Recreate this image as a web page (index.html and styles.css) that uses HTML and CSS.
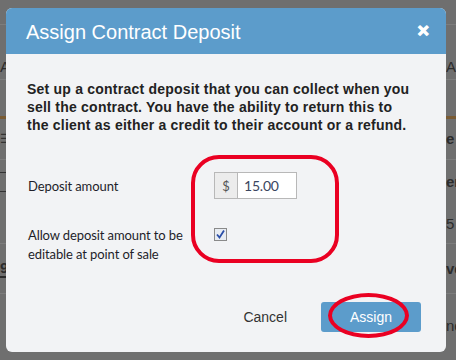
FILE: index.html
```html
<!DOCTYPE html>
<html>
<head>
<meta charset="utf-8">
<link rel="stylesheet" href="styles.css">
</head>
<body>
<div class="page">
  <div class="row r1"><span></span><span></span></div>
  <div class="row r2"><span class="frag">A</span><span class="frag right">AC</span></div>
  <div class="row r3"><span></span><span></span></div>
  <div class="bar"></div>
  <div class="row r4"><span class="frag icon">&#9776;</span><span class="frag right bold">e</span></div>
  <div class="row r5"><span class="frag box"></span><span class="frag right bold">em</span></div>
  <div class="row r6"><span></span><span class="frag right">5</span></div>
  <div class="row r7"><span class="frag bold under">9</span><span class="frag right bold">ve</span></div>
  <div class="row r9"><span></span><span class="frag right">ne</span></div>
</div>

<div class="modal">
  <div class="modal-header">
    <h1 class="title">Assign Contract Deposit</h1>
    <span class="close">&#x2715;</span>
  </div>
  <div class="modal-body">
    <p class="intro">Set up a contract deposit that you can collect when you sell the contract. You have the ability to return this to the client as either a credit to their account or a refund.</p>
    <div class="form">
      <div class="form-row">
        <label class="label">Deposit amount</label>
        <div class="input-group">
          <span class="addon">$</span>
          <span class="input">15.00</span>
        </div>
      </div>
      <div class="form-row">
        <label class="label">Allow deposit amount to be editable at point of sale</label>
        <span class="checkbox">
          <svg width="11" height="11" viewBox="0 0 11 11"><path d="M2 5.5 L4.5 8.5 L9 1.5" fill="none" stroke="#2a4ea8" stroke-width="1.8"/></svg>
        </span>
      </div>
      <div class="mark-rect"></div>
    </div>
  </div>
  <div class="modal-footer">
    <span class="btn-cancel">Cancel</span>
    <span class="btn-assign">Assign<span class="mark-ellipse"></span></span>
  </div>
</div>
</body>
</html>
```
FILE: styles.css
```css
* { box-sizing: border-box; }
html, body { margin: 0; padding: 0; }
body {
  width: 456px;
  height: 360px;
  background: #6f6f6f;
  overflow: hidden;
  position: relative;
  font-family: "Liberation Sans", Arial, sans-serif;
}

/* backdrop page */
.page { width: 456px; }
.row {
  display: flex;
  justify-content: space-between;
  align-items: center;
  border-bottom: 1px solid #7d7d7d;
}
.r1 { height: 25px; }
.r2 { height: 55px; align-items: flex-end; padding-bottom: 4px; }
.r3 { height: 36px; border-bottom: none; }
.bar { height: 3px; background: #7a5c34; }
.r4 { height: 41px; }
.r5 { height: 44px; border-bottom: none; }
.r6 { height: 40px; }
.r7 { height: 50px; }
.r9 { height: 64px; border-bottom: none; }
.frag { font-size: 15px; color: #2c2c2c; line-height: 16px; }
.frag.right { width: 10px; overflow: hidden; white-space: nowrap; }
.frag.bold { font-weight: bold; }
.frag.under { border-bottom: 2px solid #2c2c2c; }
.frag.icon { font-size: 12px; color: #333; }
.frag.box { width: 8px; height: 20px; border: 1px solid #333; border-left: none; }

/* modal */
.modal {
  position: absolute;
  left: 6px;
  top: 8px;
  width: 440px;
  height: 344px;
  background: #f2f3f5;
  border-radius: 6px;
  overflow: hidden;
  display: flex;
  flex-direction: column;
}
.modal-header {
  height: 46px;
  flex: none;
  background: #5c9ccb;
  display: flex;
  align-items: center;
  justify-content: space-between;
  padding: 0 16px 0 20px;
}
.title {
  margin: 0;
  color: #fff;
  font-weight: normal;
  font-size: 20px;
  line-height: 24px;
  margin-top: 1px;
}
.close {
  color: #fff;
  font-size: 15px;
  font-weight: bold;
  line-height: 16px;
  -webkit-text-stroke: 1.2px #fff;
}
.modal-body {
  padding: 26px 0 0 21px;
  flex: 1;
}
.intro {
  margin: 0;
  width: 386px;
  font-size: 14px;
  font-weight: bold;
  color: #222;
  line-height: 18px;
  letter-spacing: 0.22px;
}
.form {
  position: relative;
  margin-top: 38px;
}
.form-row {
  display: flex;
  align-items: flex-start;
}
.form-row + .form-row { margin-top: 27px; }
.label {
  width: 187px;
  font-family: Lato, "Open Sans", sans-serif;
  font-size: 13px;
  letter-spacing: -0.1px;
  color: #1e1e2a;
  line-height: 19px;
  padding-left: 1px;
}
.form-row:first-child .label { padding-top: 5px; }
.input-group {
  display: flex;
  height: 27px;
  border: 1px solid #b8b8b8;
  background: #fff;
}
.addon {
  width: 23px;
  background: #ececec;
  border-right: 1px solid #b8b8b8;
  display: flex;
  align-items: center;
  justify-content: center;
  font-family: Lato, sans-serif;
  font-size: 13px;
  color: #555;
}
.input {
  width: 58px;
  padding-left: 6px;
  display: flex;
  align-items: center;
  font-family: Lato, sans-serif;
  font-size: 14px;
  letter-spacing: -0.2px;
  color: #3a4660;
}
.checkbox {
  margin-top: 2px;
  width: 13px;
  height: 13px;
  border: 1px solid #8a8a8a;
  background: #e8ecf2;
  display: flex;
  align-items: center;
  justify-content: center;
}
.mark-rect {
  position: absolute;
  left: 164px;
  top: -17px;
  width: 148px;
  height: 108px;
  border: 4px solid #ea0022;
  border-radius: 28px;
}
.modal-footer {
  height: 66px;
  flex: none;
  display: flex;
  align-items: flex-start;
  justify-content: flex-end;
  padding: 16px 25px 0 0;
}
.btn-cancel {
  font-size: 14px;
  color: #333;
  line-height: 30px;
  margin-right: 34px;
}
.btn-assign {
  position: relative;
  width: 100px;
  height: 30px;
  background: #5c9ccb;
  border-radius: 3px;
  color: #fff;
  font-size: 14px;
  display: flex;
  align-items: center;
  justify-content: center;
}
.mark-ellipse {
  position: absolute;
  left: 7px;
  top: -9px;
  width: 81px;
  height: 45px;
  border: 4px solid #ea0022;
  border-radius: 50%;
}
```
